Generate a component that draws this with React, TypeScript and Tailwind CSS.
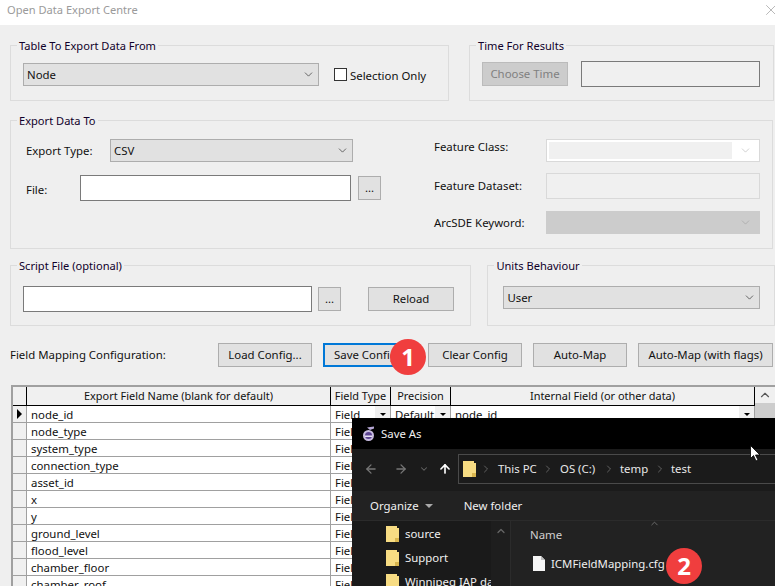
import { ChevronDown, ChevronUp, ArrowLeft, ArrowRight, ArrowUp, ChevronRight, X } from "lucide-react";
import type { ReactNode } from "react";

const font = "font-['Noto_Sans',sans-serif]";

const rows = [
  "node_id",
  "node_type",
  "system_type",
  "connection_type",
  "asset_id",
  "x",
  "y",
  "ground_level",
  "flood_level",
  "chamber_floor",
  "chamber_roof",
];

function Group({ title, className, children }: { title: string; className: string; children: ReactNode }) {
  return (
    <fieldset className={`border border-[#dcdcdc] ${className}`}>
      <legend className="ml-[6px] px-[2px] pt-[1px] text-[11.1px] leading-[16px] text-[#10002a]">{title}</legend>
      {children}
    </fieldset>
  );
}

function Combo({ value, className }: { value: string; className: string }) {
  return (
    <div className={`flex h-[23px] items-center justify-between border border-[#adadad] bg-[#e1e1e1] pl-[3px] pr-[3px] text-[11.4px] text-[#111] ${className}`}>
      <span>{value}</span>
      <ChevronDown size={13} strokeWidth={1.3} className="text-[#333]" />
    </div>
  );
}

function Btn({ label, className }: { label: string; className: string }) {
  return (
    <button type="button" className={`flex h-[24px] items-center justify-center border border-[#adadad] bg-[#e1e1e1] text-[11.4px] text-[#111] ${className}`}>
      {label}
    </button>
  );
}

function Arrow() {
  return <span className="h-0 w-0 border-x-[3px] border-t-[3px] border-x-transparent border-t-black" />;
}

function DropCell({ text }: { text: string }) {
  return (
    <div className="flex h-[17px] items-center justify-between border-r border-b border-[#a0a0a0] bg-white pl-[4px] text-[11.4px] text-[#111]">
      <span>{text}</span>
      <span className="flex h-[16px] w-[15px] items-center justify-center bg-[#f0f0f0]">
        <Arrow />
      </span>
    </div>
  );
}

function Grid() {
  return (
    <div className="relative ml-[11px] w-[764px] border-t-2 border-l-2 border-[#a0a0a0]">
      <div className="grid h-[19px] grid-cols-[14px_304px_60px_60px_304px_20px] bg-[#f0f0f0] text-[10.95px] leading-[18px] text-[#111]">
        <div className="border-r border-b border-black" />
        <div className="border-r border-b border-black text-center">Export Field Name (blank for default)</div>
        <div className="border-r border-b border-black text-center">Field Type</div>
        <div className="border-r border-b border-black text-center">Precision</div>
        <div className="border-r border-b border-black text-center">Internal Field (or other data)</div>
        <div className="flex flex-col items-center justify-between pt-[1px]">
          <ChevronUp size={14} strokeWidth={2} className="text-[#555]" />
          <span className="h-[3px] w-full bg-[#cdcdcd]" />
        </div>
      </div>
      {rows.map((name, i) => (
        <div key={name} className="grid h-[17px] grid-cols-[14px_304px_60px_60px_304px_20px] text-[11.4px] leading-[15px] text-[#111]">
          <div className="flex items-center justify-center border-r border-b border-[#a0a0a0] bg-[#f0f0f0]">
            {i === 0 ? <span className="h-0 w-0 border-y-[5px] border-l-[5px] border-y-transparent border-l-black" /> : null}
          </div>
          <div className="border-r border-b border-[#a0a0a0] bg-white pt-[1px] pl-[4px]">{name}</div>
          {i === 0 ? (
            <>
              <DropCell text="Field" />
              <DropCell text="Default" />
              <DropCell text="node_id" />
              <div className="bg-[#cdcdcd]" />
            </>
          ) : (
            <>
              <div className="border-r border-b border-[#a0a0a0] bg-white pt-[1px] pl-[4px]">Field</div>
              <div />
              <div />
              <div />
            </>
          )}
        </div>
      ))}
    </div>
  );
}

function Folder({ className }: { className: string }) {
  return (
    <svg viewBox="0 0 13 16" className={className}>
      <path d="M0 0h11v2h2v14H0z" fill="#f7dc83" />
      <path d="M9 16v-4h4v4z" fill="#d9b64f" />
    </svg>
  );
}

function Crumb({ label, className }: { label: string; className: string }) {
  return (
    <>
      <ChevronRight size={12} strokeWidth={1.5} className="text-[#777]" />
      <span className={className}>{label}</span>
    </>
  );
}

function NavItem({ label }: { label: string }) {
  return (
    <div className="flex h-[24px] items-center gap-[6px] pl-[34px] text-[11.4px] whitespace-nowrap text-[#f0f0f0]">
      <Folder className="h-[16px] w-[13px]" />
      <span>{label}</span>
    </div>
  );
}

function SaveAs() {
  return (
    <div className="absolute top-[418px] left-[352px] flex h-[168px] w-[423px] flex-col bg-[#222222] text-white">
      <div className="flex h-[31px] shrink-0 items-center gap-[5px] bg-black pl-[10px] text-[11.4px] text-[#f0f0f0]">
        <svg viewBox="0 0 14 16" className="h-[16px] w-[14px]">
          <path d="M5 1.5l7-1v2l-4 1.500z" fill="#b7a8d6" />
          <circle cx="6.500" cy="9.500" r="5.500" fill="#c8bce0" />
          <circle cx="6.500" cy="9.500" r="3.500" fill="#5b4391" />
          <path d="M3 9.500h7v1.500H3z" fill="#e6e0f2" />
        </svg>
        <span>Save As</span>
      </div>
      <div className="flex h-[42px] shrink-0 items-center bg-[#1b1b1b] pb-[3px] pl-[12px]">
        <ArrowLeft size={14} strokeWidth={2.2} className="text-[#777]" />
        <ArrowRight size={14} strokeWidth={2.2} className="ml-[16px] text-[#777]" />
        <ChevronDown size={10} strokeWidth={2.5} className="ml-[11px] text-[#666]" />
        <ArrowUp size={14} strokeWidth={2.8} className="ml-[9px] text-white" />
        <div className="ml-[6px] flex h-[30px] flex-1 items-center border border-r-0 border-[#4a4a4a] pl-[4px] text-[11.4px] text-[#e8e8e8]">
          <Folder className="h-[16px] w-[13px]" />
          <span className="w-[4px]" />
          <Crumb label="This PC" className="ml-[6px] w-[44px]" />
          <Crumb label="OS (C:)" className="ml-[6px] w-[43px]" />
          <Crumb label="temp" className="ml-[5px] w-[34px]" />
          <Crumb label="test" className="ml-[5px]" />
        </div>
      </div>
      <div className="flex h-[30px] shrink-0 items-center border-b border-[#2b2b2b] bg-[#222222] pl-[18px] text-[11.4px] text-[#f0f0f0]">
        <span>Organize</span>
        <span className="ml-[6px] h-0 w-0 border-x-[4px] border-t-[4px] border-x-transparent border-t-[#aaa]" />
        <span className="ml-[31px]">New folder</span>
      </div>
      <div className="flex min-h-0 flex-1">
        <div className="relative w-[158px] overflow-hidden bg-[#1a1a1a] pt-[1px]">
          <NavItem label="source" />
          <NavItem label="Support" />
          <NavItem label="Winnipeg IAP da" />
          <div className="absolute top-0 right-0 flex h-full w-[19px] justify-center bg-[#1e1e1e] pt-[4px]">
            <ChevronUp size={12} strokeWidth={2.5} className="text-[#666]" />
          </div>
        </div>
        <div className="relative flex-1 border-l border-[#2b2b2b] pl-[19px]">
          <ChevronUp size={11} strokeWidth={1.5} className="absolute top-[-3px] left-[138px] text-[#888]" />
          <div className="flex h-[28px] items-center text-[11.4px] text-[#d0d0d0]">Name</div>
          <div className="mt-[6px] flex items-center gap-[6px] pl-[3px] text-[11.4px] text-[#f0f0f0]">
            <svg viewBox="0 0 12 15" className="h-[15px] w-[12px]">
              <path d="M0 0h8l4 4v11H0z" fill="#f5f5f5" />
              <path d="M8 0l4 4H8z" fill="#bdbdbd" />
            </svg>
            <span>ICMFieldMapping.cfg</span>
          </div>
        </div>
      </div>
    </div>
  );
}

function Badge({ n, className }: { n: string; className: string }) {
  return (
    <div className={`absolute flex h-[36px] w-[36px] items-center justify-center rounded-full bg-[#f03e3e] text-[24px] font-bold text-white ${className}`}>
      {n}
    </div>
  );
}

export default function App() {
  return (
    <div className={`relative h-[586px] w-[775px] overflow-hidden bg-[#efefef] ${font}`}>
      <div className="flex h-[25px] items-center justify-between bg-white pb-[5px] pl-[7px] text-[11.1px] text-[#9a9a9a]">
        <span>Open Data Export Centre</span>
        <X size={18} strokeWidth={0.8} className="-mr-[5px] text-[#8a8a8a]" />
      </div>

      <div className="mt-[12px] flex pl-[10px]">
        <Group title="Table To Export Data From" className="h-[64px] w-[439px]">
          <div className="mt-[9px] flex items-center pl-[12px]">
            <Combo value="Node" className="w-[296px]" />
            <span className="ml-[15px] h-[13px] w-[13px] border border-[#333] bg-white" />
            <span className="mt-[2px] ml-[3px] text-[11.4px] text-[#111]">Selection Only</span>
          </div>
        </Group>
        <Group title="Time For Results" className="ml-[20px] h-[64px] w-[305px]">
          <div className="mt-[7px] flex items-center pl-[12px]">
            <Btn label="Choose Time" className="w-[86px] !border-[#bbb] !bg-[#cccccc] !text-[#808080]" />
            <div className="ml-[13px] h-[26px] w-[179px] border border-[#7a7a7a] bg-[#f0f0f0]" />
          </div>
        </Group>
      </div>

      <Group title="Export Data To" className="mt-[11px] ml-[10px] h-[137px] w-[763px]">
        <div className="flex pt-[10px] pl-[15px] text-[11.4px] text-[#111]">
          <div className="w-[408px]">
            <div className="flex h-[23px] items-center">
              <span className="w-[84px]">Export Type:</span>
              <Combo value="CSV" className="w-[243px]" />
            </div>
            <div className="mt-[13px] flex h-[26px] items-center">
              <span className="w-[54px] pt-[3px]">File:</span>
              <div className="h-[26px] w-[271px] border border-[#7a7a7a] bg-white" />
              <Btn label="..." className="ml-[7px] w-[23px]" />
            </div>
          </div>
          <div className="w-[326px]">
            <div className="flex h-[23px] items-start">
              <span className="w-[112px] leading-[16px]">Feature Class:</span>
              <div className="flex h-[23px] w-[214px] items-center justify-end border border-[#d9d9d9] bg-white p-[2px] pr-[7px]">
                <div className="mr-[7px] h-[17px] flex-1 bg-[#f0f0f0]" />
                <ChevronDown size={13} strokeWidth={1} className="text-[#aaa]" />
              </div>
            </div>
            <div className="mt-[11px] flex h-[26px] items-center">
              <span className="w-[112px]">Feature Dataset:</span>
              <div className="h-[26px] w-[214px] border border-[#d9d9d9] bg-[#f0f0f0]" />
            </div>
            <div className="mt-[12px] flex h-[23px] items-center">
              <span className="w-[112px]">ArcSDE Keyword:</span>
              <div className="flex h-[23px] w-[214px] items-center justify-end border border-[#cccccc] bg-[#cccccc] pr-[7px]">
                <ChevronDown size={13} strokeWidth={1} className="text-[#999]" />
              </div>
            </div>
          </div>
        </div>
      </Group>

      <div className="mt-[8px] flex pl-[10px]">
        <Group title="Script File (optional)" className="h-[69px] w-[462px]">
          <div className="mt-[12px] flex items-center pl-[12px]">
            <div className="h-[26px] w-[289px] border border-[#7a7a7a] bg-white" />
            <Btn label="..." className="ml-[6px] w-[23px]" />
            <Btn label="Reload" className="ml-[27px] w-[86px]" />
          </div>
        </Group>
        <Group title="Units Behaviour" className="ml-[16px] h-[69px] w-[288px]">
          <div className="mt-[12px] pl-[15px]">
            <Combo value="User" className="w-[257px]" />
          </div>
        </Group>
      </div>

      <div className="mt-[17px] flex h-[24px] items-center pl-[10px] text-[11.4px] text-[#111]">
        <span className="w-[208px]">Field Mapping Configuration:</span>
        <Btn label="Load Config..." className="w-[94px]" />
        <Btn label="Save Config..." className="ml-[11px] w-[94px] !justify-start !border-2 !border-[#0078d7] pl-[9px]" />
        <Btn label="Clear Config" className="ml-[11px] w-[94px]" />
        <Btn label="Auto-Map" className="ml-[11px] w-[94px]" />
        <Btn label="Auto-Map (with flags)" className="ml-[11px] w-[135px]" />
      </div>

      <div className="mt-[18px]">
        <Grid />
      </div>

      <SaveAs />
      <Badge n="1" className="top-[339px] left-[390px]" />
      <Badge n="2" className="top-[548px] left-[666px]" />

      <svg viewBox="0 0 12 17" className="absolute top-[445px] left-[750px] h-[17px] w-[12px]">
        <path d="M0.5 0.5v13l3-3 2.5 5.5 2-1-2.5-5h4.5z" fill="#fff" stroke="#000" strokeWidth="0.8" />
      </svg>
    </div>
  );
}
